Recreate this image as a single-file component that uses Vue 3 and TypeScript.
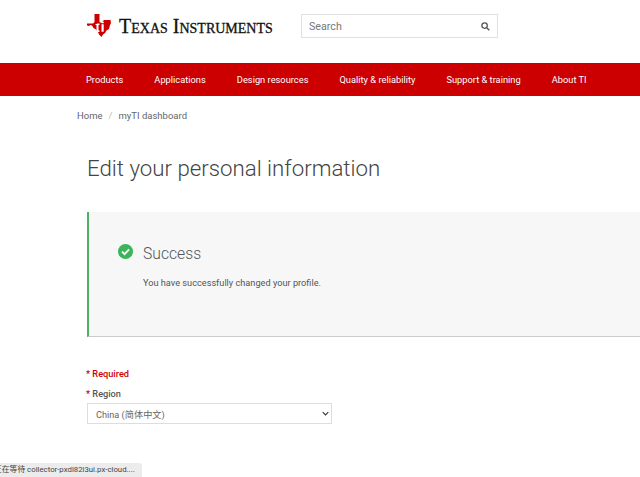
<script setup lang="ts">
const navItems: string[] = ['Products', 'Applications', 'Design resources', 'Quality & reliability', 'Support & training', 'About TI']
</script>

<template>
  <div class="page">
    <header class="top">
      <div class="logo">
        <svg class="mark" viewBox="0 0 24 24" width="24" height="24">
          <path fill="#cc0000" d="M7.500 0h5v8l2 1 1-1.500 1.500-1.500h6.500l.5 3-1 2-1 4-2.500 1.500-1.500 2.500-2 1.500-1.500 2.500-2.500-2.500-1-2.500-2-2.500-2.500-1.500-1.500-2.500-1.500-.5-1.500 1L0 11.500v-2h6L7.500 8z"/>
          <path fill="#fff" d="M10.500 9.500h2v1.600h-1v4.700c0 .6.400.8 1 .7v1.500c-1.500.2-3-.2-3-2v-4.900h-1v-1h1zM14.500 7.500h2.200v1.800h-2.200zM14.500 10.300h2.200v7.500h-2.200z"/>
        </svg>
        <span class="wordmark">Texas Instruments</span>
      </div>
      <div class="search">
        <span class="search-text">Search</span>
        <svg class="search-icon" viewBox="0 0 10 10" width="9" height="9">
          <circle cx="4" cy="4" r="3" fill="none" stroke="#555" stroke-width="1.400"/>
          <path d="M6.300 6.300L9.200 9.200" stroke="#555" stroke-width="1.600"/>
        </svg>
      </div>
    </header>

    <nav class="nav">
      <span v-for="item in navItems" :key="item" class="nav-item">{{ item }}</span>
    </nav>

    <div class="crumbs">
      <span>Home</span>
      <span class="sep">/</span>
      <span>myTI dashboard</span>
    </div>

    <main class="content">
      <h1 class="title">Edit your personal information</h1>

      <section class="notice">
        <svg class="check" viewBox="0 0 16 16" width="15" height="15">
          <circle cx="8" cy="8" r="8" fill="#3cb55a"/>
          <path d="M4.300 8.200L7 10.800L11.800 5.800" fill="none" stroke="#fff" stroke-width="2"/>
        </svg>
        <div class="notice-body">
          <div class="notice-title">Success</div>
          <p class="notice-text">You have successfully changed your profile.</p>
        </div>
      </section>

      <div class="required"><span class="star">*</span> Required</div>
      <label class="region-label"><span class="star">*</span> Region</label>
      <div class="select">
        <span>China (简体中文)</span>
        <svg viewBox="0 0 10 6" width="7" height="5">
          <path d="M1 1l4 4 4-4" fill="none" stroke="#333" stroke-width="1.500"/>
        </svg>
      </div>
    </main>

    <div class="status">正在等待 collector-pxdl82i3ui.px-cloud....</div>
  </div>
</template>

<style scoped>
.page {
  position: relative;
  width: 640px;
  height: 477px;
  overflow: hidden;
  background: #fff;
  font-family: Roboto, "Noto Sans CJK SC", sans-serif;
  color: #555;
}
.top {
  height: 63px;
  display: flex;
  align-items: flex-start;
  padding: 14px 0 0 87px;
  box-sizing: border-box;
}
.logo {
  display: flex;
  align-items: center;
  gap: 8px;
  width: 214px;
  height: 24px;
}
.mark { flex: none; }
.wordmark {
  font-family: "Liberation Serif", serif;
  font-variant: small-caps;
  font-size: 20px;
  font-weight: 400;
  color: #111;
  white-space: nowrap;
  -webkit-text-stroke: 0.3px #111;
}
.search {
  width: 197px;
  height: 24px;
  box-sizing: border-box;
  border: 1px solid #e0e0e0;
  display: flex;
  align-items: center;
  justify-content: space-between;
  padding: 0 7px 0 7px;
  font-size: 10.700px;
  color: #777;
}
.nav {
  height: 33px;
  background: #cc0000;
  display: flex;
  align-items: center;
  gap: 31px;
  padding-left: 86px;
}
.nav-item {
  color: #fff;
  font-size: 9.300px;
  white-space: nowrap;
}
.crumbs {
  display: flex;
  gap: 6px;
  padding: 13px 0 0 77px;
  font-size: 9.500px;
  line-height: 13px;
  color: #666;
}
.sep { color: #bbb; }
.content { padding-left: 87px; }
.title {
  margin: 30px 0 0;
  font-size: 22.250px;
  line-height: 32px;
  font-weight: 300;
  color: #444;
}
.notice {
  margin-top: 28px;
  height: 125px;
  box-sizing: border-box;
  background: #f7f7f7;
  border-left: 2px solid #4cb065;
  border-bottom: 1px solid #ccc;
  display: flex;
  align-items: flex-start;
  gap: 10px;
  padding: 32px 0 0 29px;
}
.check { flex: none; }
.notice-title {
  font-size: 15.700px;
  line-height: 20px;
  font-weight: 300;
  color: #555;
}
.notice-text {
  margin: 12px 0 0;
  font-size: 9.200px;
  line-height: 14px;
  color: #555;
}
.required {
  margin-top: 30px;
  margin-left: -1px;
  font-size: 9.200px;
  line-height: 13px;
  font-weight: 500;
  color: #cc0000;
}
.region-label {
  display: block;
  margin-top: 7px;
  margin-left: -1px;
  font-size: 9.200px;
  line-height: 13px;
  font-weight: 500;
  color: #555;
}
.star { color: #cc0000; }
.select {
  margin-top: 3px;
  width: 245px;
  height: 21px;
  box-sizing: border-box;
  border: 1px solid #ddd;
  display: flex;
  align-items: center;
  justify-content: space-between;
  padding: 0 2px 0 8px;
  font-size: 9.200px;
  color: #666;
}
.status {
  position: absolute;
  left: 0;
  bottom: 0;
  width: 142px;
  height: 14px;
  box-sizing: border-box;
  background: #ececec;
  border-top-right-radius: 3px;
  overflow: hidden;
  white-space: nowrap;
  font-size: 7.800px;
  line-height: 14px;
  color: #444;
  text-indent: -6px;
}
</style>
